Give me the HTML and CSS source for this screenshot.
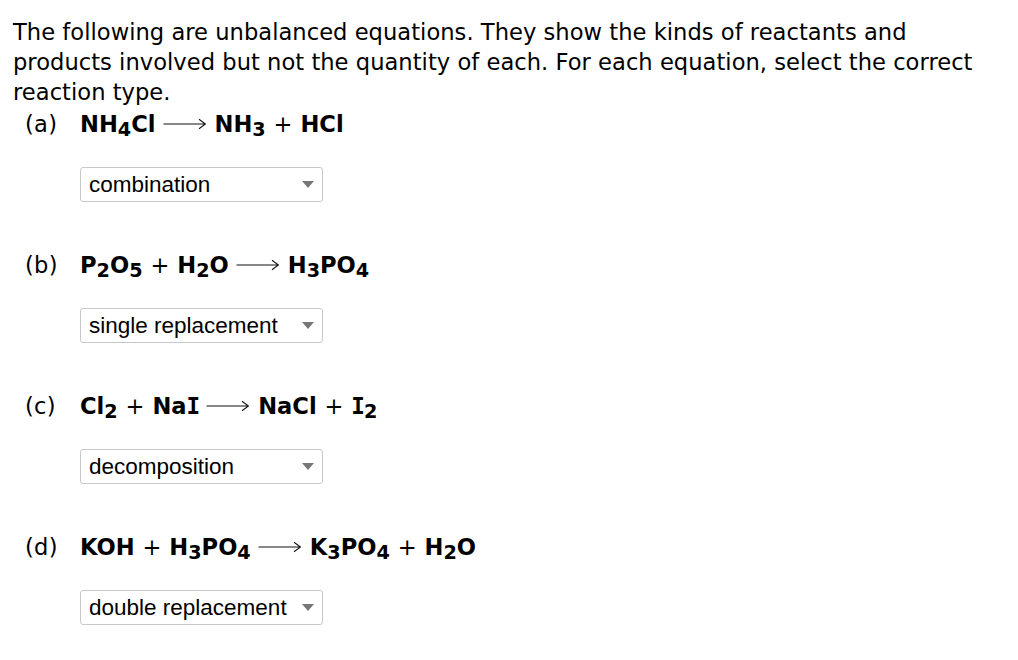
FILE: index.html
```html
<!DOCTYPE html>
<html>
<head>
<meta charset="utf-8">
<link rel="stylesheet" href="styles.css">
</head>
<body>
<div class="page">
  <p class="intro">The following are unbalanced equations. They show the kinds of reactants and products involved but not the quantity of each. For each equation, select the correct reaction type.</p>
  <div class="items">
    <div class="item">
      <div class="eq"><span class="lbl">(a)</span><span class="formula">NH<sub>4</sub>Cl<span class="arrow"><svg width="43" height="12" viewBox="0 0 43 12"><path d="M0.5 6H42.5M36 1.3L42.5 6L36 10.7" fill="none" stroke="#111" stroke-width="1.1"/></svg></span>NH<sub>3</sub> <span class="plus">+</span> HCl</span></div>
      <div class="sel"><span class="val">combination</span><span class="caret"></span></div>
    </div>
    <div class="item">
      <div class="eq"><span class="lbl">(b)</span><span class="formula">P<sub>2</sub>O<sub>5</sub> <span class="plus">+</span> H<sub>2</sub>O<span class="arrow"><svg width="43" height="12" viewBox="0 0 43 12"><path d="M0.5 6H42.5M36 1.3L42.5 6L36 10.7" fill="none" stroke="#111" stroke-width="1.1"/></svg></span>H<sub>3</sub>PO<sub>4</sub></span></div>
      <div class="sel"><span class="val">single replacement</span><span class="caret"></span></div>
    </div>
    <div class="item">
      <div class="eq"><span class="lbl">(c)</span><span class="formula">Cl<sub>2</sub> <span class="plus">+</span> Na<span class="si">I</span><span class="arrow"><svg width="43" height="12" viewBox="0 0 43 12"><path d="M0.5 6H42.5M36 1.3L42.5 6L36 10.7" fill="none" stroke="#111" stroke-width="1.1"/></svg></span>NaCl <span class="plus">+</span> <span class="si">I</span><sub>2</sub></span></div>
      <div class="sel"><span class="val">decomposition</span><span class="caret"></span></div>
    </div>
    <div class="item">
      <div class="eq"><span class="lbl">(d)</span><span class="formula">KOH <span class="plus">+</span> H<sub>3</sub>PO<sub>4</sub><span class="arrow"><svg width="43" height="12" viewBox="0 0 43 12"><path d="M0.5 6H42.5M36 1.3L42.5 6L36 10.7" fill="none" stroke="#111" stroke-width="1.1"/></svg></span>K<sub>3</sub>PO<sub>4</sub> <span class="plus">+</span> H<sub>2</sub>O</span></div>
      <div class="sel"><span class="val">double replacement</span><span class="caret"></span></div>
    </div>
  </div>
</div>
</body>
</html>
```
FILE: styles.css
```css
html, body {
  margin: 0;
  padding: 0;
  background: #fff;
}
.page {
  padding: 17px 12px 0 13px;
  font-family: "DejaVu Sans", Verdana, sans-serif;
  color: #000;
}
.intro {
  margin: 0;
  font-size: 22.6px;
  letter-spacing: 0.03px;
  line-height: 30px;
  width: 975px;
}
.items {
  display: flex;
  flex-direction: column;
}
.item {
  display: flex;
  flex-direction: column;
  height: 141px;
}
.eq {
  display: flex;
  align-items: baseline;
  font-size: 22.6px;
  line-height: 30px;
  padding-top: 2px;
}
.lbl {
  width: 55px;
  padding-left: 12px;
  letter-spacing: 0.3px;
}
.formula {
  font-weight: bold;
}
.formula sub {
  font-size: 0.85em;
  vertical-align: -0.22em;
  line-height: 0;
}
.si {
  font-family: "DejaVu Sans Mono", monospace;
  letter-spacing: -1px;
}
.plus {
  font-weight: normal;
}
.arrow {
  display: inline-block;
  margin: 0 9px 0 7px;
}
.arrow svg {
  display: block;
  transform: translateY(-2px);
}
.sel {
  margin: 28px 0 0 67px;
  height: 33px;
  border: 1px solid #c8c8c8;
  border-radius: 3px;
  display: flex;
  align-items: center;
  justify-content: space-between;
  padding: 0 0 0 8px;
  width: 233px;
  font-family: "Liberation Sans", Arial, sans-serif;
  font-size: 22.5px;
}
.val {
  white-space: nowrap;
}
.caret {
  width: 0;
  height: 0;
  border-left: 6.5px solid transparent;
  border-right: 6.5px solid transparent;
  border-top: 7px solid #777;
  margin-right: 8px;
}
```
